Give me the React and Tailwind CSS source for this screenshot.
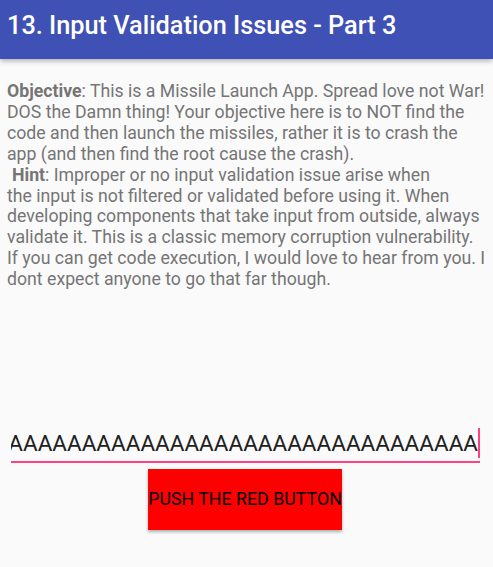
export default function App() {
  const as = "A".repeat(60);
  return (
    <div className="w-[493px] h-[567px] bg-[#fafafa] overflow-hidden" style={{ fontFamily: "Roboto, 'Noto Sans', sans-serif" }}>
      <div className="h-[59px] bg-[#3f51b5] shadow-[0_2px_5px_rgba(0,0,0,0.3)] relative z-10 pl-[7px] pt-[11px]">
        <div className="text-white text-[25.3px] leading-[29px] font-medium">13. Input Validation Issues - Part 3</div>
      </div>
      <div className="pl-[7px] pt-[22px] text-[17.7px] leading-[20.9px] text-[#757575] whitespace-nowrap">
        <b>Objective</b>: This is a Missile Launch App. Spread love not War!<br />
        DOS the Damn thing! Your objective here is to NOT find the<br />
        code and then launch the missiles, rather it is to crash the<br />
        app (and then find the root cause the crash).<br />
        <span className="pl-[5px]"><b>Hint</b>: Improper or no input validation issue arise when</span><br />
        the input is not filtered or validated before using it. When<br />
        developing components that take input from outside, always<br />
        validate it. This is a classic memory corruption vulnerability.<br />
        If you can get code execution, I would love to hear from you. I<br />
        dont expect anyone to go that far though.
      </div>
      <div className="ml-[11px] w-[469px] mt-[137px]">
        <div className="flex justify-end items-center overflow-hidden h-[32px] whitespace-nowrap">
          <span className="text-[22.5px] text-[#212121] leading-[32px] shrink-0">{as}</span>
          <span className="w-[2px] h-[30px] bg-[#ff4081] shrink-0"></span>
        </div>
        <div className="h-[2px] bg-[#ff4081] mt-[2px]"></div>
      </div>
      <div className="flex justify-center mt-[6px]">
        <div className="w-[194px] h-[61px] bg-[#ff0000] shadow-[0_2px_3px_rgba(0,0,0,0.3)] flex items-center justify-center whitespace-nowrap text-[17.8px] text-black ml-[-3px]">
          PUSH THE RED BUTTON
        </div>
      </div>
    </div>
  );
}
